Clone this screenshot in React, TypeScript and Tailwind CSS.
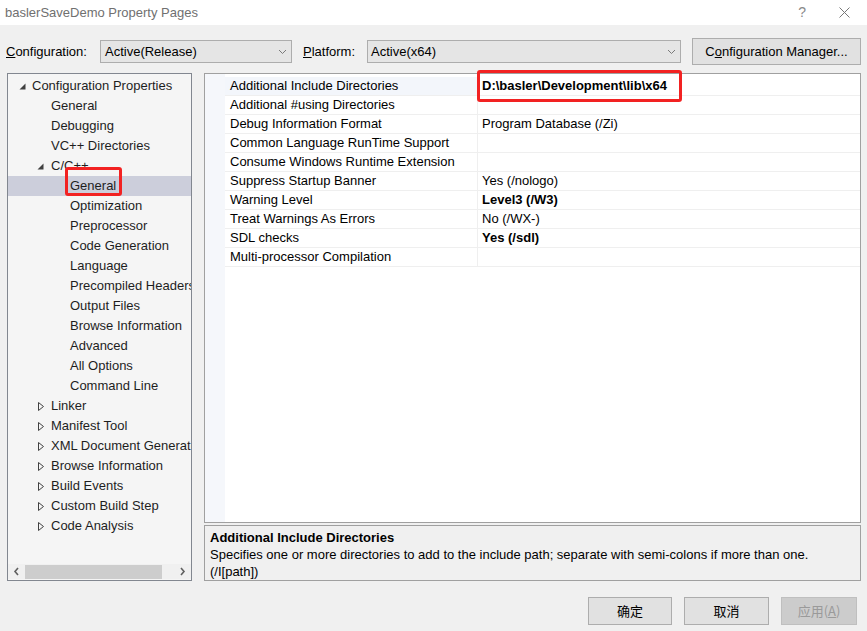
import React from 'react';

const treeItems: { label: string; level: number; arrow?: 'open' | 'closed'; selected?: boolean }[] = [
  { label: 'Configuration Properties', level: 0, arrow: 'open' },
  { label: 'General', level: 1 },
  { label: 'Debugging', level: 1 },
  { label: 'VC++ Directories', level: 1 },
  { label: 'C/C++', level: 1, arrow: 'open' },
  { label: 'General', level: 2, selected: true },
  { label: 'Optimization', level: 2 },
  { label: 'Preprocessor', level: 2 },
  { label: 'Code Generation', level: 2 },
  { label: 'Language', level: 2 },
  { label: 'Precompiled Headers', level: 2 },
  { label: 'Output Files', level: 2 },
  { label: 'Browse Information', level: 2 },
  { label: 'Advanced', level: 2 },
  { label: 'All Options', level: 2 },
  { label: 'Command Line', level: 2 },
  { label: 'Linker', level: 1, arrow: 'closed' },
  { label: 'Manifest Tool', level: 1, arrow: 'closed' },
  { label: 'XML Document Generator', level: 1, arrow: 'closed' },
  { label: 'Browse Information', level: 1, arrow: 'closed' },
  { label: 'Build Events', level: 1, arrow: 'closed' },
  { label: 'Custom Build Step', level: 1, arrow: 'closed' },
  { label: 'Code Analysis', level: 1, arrow: 'closed' },
];

const props: { name: string; value: string; bold?: boolean }[] = [
  { name: 'Additional Include Directories', value: 'D:\\basler\\Development\\lib\\x64', bold: true },
  { name: 'Additional #using Directories', value: '' },
  { name: 'Debug Information Format', value: 'Program Database (/Zi)' },
  { name: 'Common Language RunTime Support', value: '' },
  { name: 'Consume Windows Runtime Extension', value: '' },
  { name: 'Suppress Startup Banner', value: 'Yes (/nologo)' },
  { name: 'Warning Level', value: 'Level3 (/W3)', bold: true },
  { name: 'Treat Warnings As Errors', value: 'No (/WX-)' },
  { name: 'SDL checks', value: 'Yes (/sdl)', bold: true },
  { name: 'Multi-processor Compilation', value: '' },
];

const Chevron = () => (
  <svg width="9" height="6" viewBox="0 0 9 6" className="shrink-0">
    <path d="M1 1 L4.5 4.5 L8 1" fill="none" stroke="#7a7a7a" strokeWidth="1" />
  </svg>
);

const Arrow = ({ kind }: { kind: 'open' | 'closed' }) =>
  kind === 'open' ? (
    <svg width="7" height="7" viewBox="0 0 7 7">
      <path d="M6.5 0.5 L6.5 6.5 L0.5 6.5 Z" fill="#404040" />
    </svg>
  ) : (
    <svg width="6" height="9" viewBox="0 0 6 9">
      <path d="M0.5 0.5 L5.5 4.5 L0.5 8.5 Z" fill="none" stroke="#404040" strokeWidth="1" />
    </svg>
  );

const App: React.FC = () => {
  const uiFont = { fontFamily: '"Liberation Sans", "Noto Sans CJK SC", sans-serif' };

  return (
    <div
      className="w-[867px] h-[631px] bg-[#f0f0f0] flex flex-col overflow-hidden relative text-[#000]"
      style={uiFont}
    >
      {/* title bar */}
      <div className="h-[25px] bg-white flex items-center shrink-0">
        <span className="pl-[5px] text-[13px] text-[#707070]">baslerSaveDemo Property Pages</span>
        <span className="ml-auto text-[14px] text-[#8a8a8a] mr-[33px]">?</span>
        <svg width="11" height="11" viewBox="0 0 11 11" className="mr-[17px]">
          <path d="M0.5 0.5 L10.5 10.5 M10.5 0.5 L0.5 10.5" stroke="#777" strokeWidth="1" />
        </svg>
      </div>

      {/* toolbar */}
      <div className="mt-[13px] h-[27px] flex items-center pl-[6px] text-[13px] shrink-0">
        <span className="w-[94px] whitespace-nowrap">
          <u>C</u>onfiguration:
        </span>
        <div className="w-[192px] h-[23px] bg-[#e5e5e5] border border-[#adadad] flex items-center pl-[4px] pr-[4px]">
          <span className="flex-1">Active(Release)</span>
          <Chevron />
        </div>
        <span className="ml-[11px] w-[64px]">
          <u>P</u>latform:
        </span>
        <div className="w-[314px] h-[23px] bg-[#e5e5e5] border border-[#adadad] flex items-center pl-[3px] pr-[4px]">
          <span className="flex-1">Active(x64)</span>
          <Chevron />
        </div>
        <div className="ml-[11px] w-[169px] h-[27px] bg-[#e1e1e1] border border-[#adadad] flex items-center justify-center">
          C<u>o</u>nfiguration Manager...
        </div>
      </div>

      {/* main */}
      <div className="mt-[8px] flex shrink-0">
        <div className="ml-[7px] w-[185px] h-[508px] border border-[#828790] bg-[#f5f5f5] flex flex-col">
          <div className="flex-1 pt-[2px] overflow-hidden text-[13px]">
            {treeItems.map((it, i) => (
              <div
                key={i}
                className={`h-[20px] flex items-center whitespace-nowrap relative ${it.selected ? 'bg-[#cccedb]' : ''}`}
              >
                <div
                  className={`flex items-center justify-center shrink-0 ${
                    it.level === 0 ? 'w-[24px] pl-[4px]' : it.level === 1 ? 'w-[43px] pl-[22px]' : 'w-[62px]'
                  }`}
                >
                  {it.arrow && <Arrow kind={it.arrow} />}
                </div>
                <span className="text-[#1e1e1e]">{it.label}</span>
                {it.selected && (
                  <div className="absolute left-[57px] top-[-9px] w-[57px] h-[29px] border-[3px] border-[#f22222] rounded-[3px]" />
                )}
              </div>
            ))}
          </div>
          <div className="h-[15px] mb-[1px] bg-[#f0f0f0] flex items-center">
            <svg width="17" height="15" viewBox="0 0 17 15" className="shrink-0">
              <path d="M10 4 L7 7.5 L10 11" fill="none" stroke="#606060" strokeWidth="1.6" />
            </svg>
            <div className="w-[137px] h-[14px] bg-[#cdcdcd]" />
            <div className="flex-1" />
            <svg width="17" height="15" viewBox="0 0 17 15" className="shrink-0">
              <path d="M7 4 L10 7.5 L7 11" fill="none" stroke="#606060" strokeWidth="1.6" />
            </svg>
          </div>
        </div>

        <div className="ml-[12px] w-[657px] flex flex-col">
          <div className="h-[450px] border border-[#a0a0a0] bg-white relative text-[13px]">
            <div className="absolute left-0 top-0 bottom-0 w-[20px] bg-[#f5f7fb]" />
            <div className="pt-[3px]">
              {props.map((p, i) => (
                <div key={i} className="h-[19px] flex ml-[20px] border-b border-[#efefef]">
                  <div
                    className={`w-[253px] pl-[5px] flex items-center border-r border-[#efefef] whitespace-nowrap ${
                      i === 0 ? 'bg-[#f3f6fb]' : ''
                    }`}
                  >
                    {p.name}
                  </div>
                  <div className={`flex-1 pl-[4px] flex items-center ${p.bold ? 'font-bold' : ''}`}>{p.value}</div>
                </div>
              ))}
            </div>
            <div className="absolute left-[272px] top-[-4px] w-[205px] h-[32px] border-[3px] border-[#f22222] rounded-[3px]" />
          </div>
          <div className="mt-[2px] h-[56px] border border-[#a0a0a0] bg-[#f0f0f0] pl-[5px] pt-[3px] text-[13px] leading-[17px]">
            <div className="font-bold">Additional Include Directories</div>
            <div>Specifies one or more directories to add to the include path; separate with semi-colons if more than one.</div>
            <div>(/I[path])</div>
          </div>
        </div>
      </div>

      {/* buttons */}
      <div
        className="mt-[16px] flex justify-end pr-[10px] gap-[12px] text-[13px]"
        style={{ fontFamily: '"Noto Sans CJK SC", "Liberation Sans", sans-serif' }}
      >
        <div className="w-[84px] h-[28px] bg-[#e1e1e1] border border-[#adadad] flex items-center justify-center">确定</div>
        <div className="w-[85px] h-[28px] bg-[#e1e1e1] border border-[#adadad] flex items-center justify-center">取消</div>
        <div className="w-[76px] h-[28px] bg-[#cccccc] border border-[#bfbfbf] flex items-center justify-center text-[#9a9a9a]">
          应用(<u>A</u>)
        </div>
      </div>
    </div>
  );
};

export default App;
